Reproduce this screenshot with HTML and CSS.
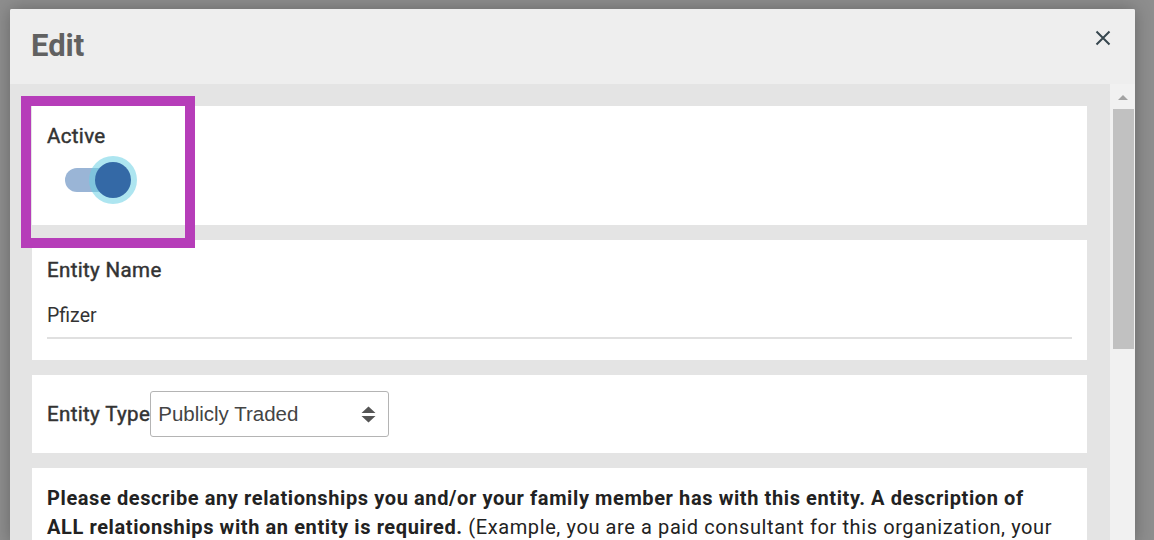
FILE: index.html
```html
<!DOCTYPE html>
<html lang="en">
<head>
<meta charset="utf-8">
<title>Edit</title>
<link rel="stylesheet" href="styles.css">
</head>
<body>
<div class="backdrop">
  <div class="modal">
    <div class="modal-header">
      <h1 class="modal-title">Edit</h1>
      <button class="close-btn" aria-label="Close">
        <svg width="16" height="16" viewBox="0 0 16 16"><path d="M1.5 1.5 L14.5 14.5 M14.5 1.5 L1.5 14.5" stroke="#37474f" stroke-width="2" fill="none"/></svg>
      </button>
    </div>
    <div class="modal-body">
      <div class="content">
        <div class="card card-active">
          <div class="highlight"></div>
          <div class="label">Active</div>
          <div class="switch">
            <div class="switch-track"></div>
            <div class="switch-halo"><div class="switch-thumb"></div></div>
          </div>
        </div>
        <div class="card card-name">
          <div class="label">Entity Name</div>
          <div class="text-input">Pfizer</div>
        </div>
        <div class="card card-type">
          <div class="label">Entity Type</div>
          <div class="select">
            <span class="select-value">Publicly Traded</span>
            <svg class="select-arrows" width="15" height="17" viewBox="0 0 15 17"><path d="M0.5 7 L7.5 0.5 L14.5 7 Z M0.5 10 L14.5 10 L7.5 16.5 Z" fill="#555"/></svg>
          </div>
        </div>
        <div class="card card-desc">
          <p class="desc"><strong>Please describe any relationships you and/or your family member has with this entity. A description of ALL relationships with an entity is required.</strong> (Example, you are a paid consultant for this organization, your spouse owns stock in this company, you receive royalties from this entity.)</p>
        </div>
      </div>
      <div class="scrollbar">
        <div class="scroll-arrow"></div>
        <div class="scroll-thumb"></div>
      </div>
    </div>
  </div>
</div>
</body>
</html>
```

FILE: styles.css
```css
html, body {
  margin: 0;
  padding: 0;
  height: 540px;
  overflow: hidden;
  background: #8e8e8e;
  font-family: Roboto, "Liberation Sans", Arial, sans-serif;
}

.backdrop {
  padding: 9px 0 0 10px;
  height: 540px;
  box-sizing: border-box;
}

.modal {
  width: 1125px;
  background: #eeeeee;
  border-radius: 2px 2px 0 0;
  box-shadow: 0 0 18px rgba(0, 0, 0, 0.28);
}

.modal-header {
  height: 75px;
  box-sizing: border-box;
  display: flex;
  justify-content: space-between;
  align-items: flex-start;
  padding: 18px 24px 0 21px;
  background: #eeeeee;
  border-radius: 2px 2px 0 0;
}

.modal-title {
  margin: 0;
  font-size: 31px;
  font-weight: 700;
  color: #616161;
  line-height: normal;
}

.close-btn {
  margin-top: 3px;
  padding: 0;
  border: 0;
  background: transparent;
  width: 16px;
  height: 16px;
  display: block;
}

.close-btn svg {
  display: block;
}

.modal-body {
  display: flex;
  height: 460px;
}

.content {
  width: 1100px;
  box-sizing: border-box;
  background: #e4e4e4;
  padding: 22px 23px 0 22px;
}

.card {
  background: #ffffff;
  padding: 0 15px;
  margin-bottom: 15px;
  position: relative;
}

.label {
  font-size: 20.5px;
  font-weight: 400;
  -webkit-text-stroke: 0.45px #333333;
  letter-spacing: 0.35px;
  color: #333333;
  line-height: 23px;
}

.card-active {
  padding-top: 19px;
  padding-bottom: 21px;
}

.highlight {
  position: absolute;
  left: -11px;
  top: -10px;
  width: 174px;
  height: 152px;
  box-sizing: border-box;
  border: 10px solid #b63db9;
  z-index: 2;
}

.switch {
  position: relative;
  width: 72px;
  height: 48px;
  margin: 8px 0 0 18px;
}

.switch-track {
  position: absolute;
  left: 0;
  top: 12px;
  width: 52px;
  height: 24px;
  border-radius: 12px;
  background: #9ab5d6;
}

.switch-halo {
  position: absolute;
  left: 24px;
  top: 0;
  width: 48px;
  height: 48px;
  border-radius: 50%;
  background: rgba(105, 207, 227, 0.55);
  display: flex;
  align-items: center;
  justify-content: center;
}

.switch-thumb {
  width: 36px;
  height: 36px;
  border-radius: 50%;
  background: #3469a6;
}

.card-name {
  padding-top: 19px;
  padding-bottom: 21px;
}

.text-input {
  margin-top: 22px;
  font-size: 19.5px;
  line-height: 23px;
  color: #333333;
  padding-bottom: 10px;
  border-bottom: 2px solid #e0e0e0;
}

.card-type {
  display: flex;
  align-items: center;
  padding-top: 16px;
  padding-bottom: 16px;
}

.select {
  width: 239px;
  height: 46px;
  box-sizing: border-box;
  border: 1px solid #b4b4b4;
  border-radius: 3px;
  display: flex;
  align-items: center;
  justify-content: space-between;
  padding: 0 12px 0 7px;
}

.select-value {
  font-family: "Liberation Sans", Arial, sans-serif;
  font-size: 20.5px;
  color: #444444;
}

.select-arrows {
  display: block;
}

.card-desc {
  padding: 16px 25px 16px 15px;
}

.desc {
  margin: 0;
  font-size: 20px;
  line-height: 29px;
  letter-spacing: 0.6px;
  color: #222222;
}

.desc strong {
  font-weight: 700;
  letter-spacing: 0.6px;
}

.scrollbar {
  width: 25px;
  background: #f1f1f1;
  display: flex;
  flex-direction: column;
  align-items: center;
}

.scroll-arrow {
  margin-top: 11px;
  width: 0;
  height: 0;
  border-left: 5.5px solid transparent;
  border-right: 5.5px solid transparent;
  border-bottom: 5px solid #a3a3a3;
}

.scroll-thumb {
  margin-top: 9px;
  margin-left: 2px;
  width: 21px;
  height: 240px;
  background: #c1c1c1;
}
```
